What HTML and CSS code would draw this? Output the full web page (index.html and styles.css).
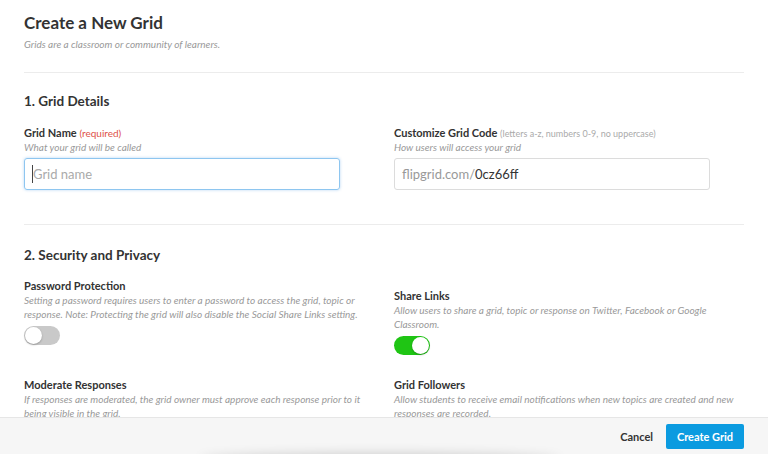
FILE: index.html
```html
<!DOCTYPE html>
<html>
<head>
<meta charset="utf-8">
<link rel="stylesheet" href="styles.css">
</head>
<body>
<div class="page">
  <header class="head">
    <h1 class="title">Create a New Grid</h1>
    <p class="subtitle">Grids are a classroom or community of learners.</p>
  </header>
  <hr class="rule rule-first">
  <section class="section">
    <h2 class="sec-title">1. Grid Details</h2>
    <div class="cols">
      <div class="field">
        <div class="label">Grid Name <span class="req">(required)</span></div>
        <div class="help">What your grid will be called</div>
        <div class="input focus"><span class="caret"></span><span class="ph">Grid name</span></div>
      </div>
      <div class="field">
        <div class="label">Customize Grid Code <span class="note">(letters a-z, numbers 0-9, no uppercase)</span></div>
        <div class="help">How users will access your grid</div>
        <div class="input"><span class="prefix">flipgrid.com/</span><span class="val">0cz66ff</span></div>
      </div>
    </div>
  </section>
  <hr class="rule rule-second">
  <section class="section">
    <h2 class="sec-title">2. Security and Privacy</h2>
    <div class="cols opts">
      <div class="opt">
        <div class="label">Password Protection</div>
        <div class="desc">Setting a password requires users to enter a password to access the grid, topic or response. Note: Protecting the grid will also disable the Social Share Links setting.</div>
        <div class="toggle"><span class="knob"></span></div>
      </div>
      <div class="opt opt-shift">
        <div class="label">Share Links</div>
        <div class="desc">Allow users to share a grid, topic or response on Twitter, Facebook or Google Classroom.</div>
        <div class="toggle on"><span class="knob"></span></div>
      </div>
      <div class="opt">
        <div class="label">Moderate Responses</div>
        <div class="desc">If responses are moderated, the grid owner must approve each response prior to it being visible in the grid.</div>
      </div>
      <div class="opt">
        <div class="label">Grid Followers</div>
        <div class="desc">Allow students to receive email notifications when new topics are created and new responses are recorded.</div>
      </div>
    </div>
  </section>
</div>
<footer class="footer">
  <div class="shade"></div>
  <button class="cancel">Cancel</button>
  <button class="primary">Create Grid</button>
</footer>
</body>
</html>
```
FILE: styles.css
```css
* { box-sizing: border-box; }
html, body { margin: 0; padding: 0; background: #fff; }
body {
  font-family: "Lato", "Open Sans", sans-serif;
  color: #333;
  overflow: hidden;
  height: 454px;
}
.page { padding: 11px 24px 0; }
.title {
  margin: 0;
  font-size: 17px;
  line-height: 24px;
  font-weight: 700;
  color: #333;
}
.subtitle {
  margin: 2px 0 0;
  font-size: 10px;
  line-height: 14px;
  font-style: italic;
  color: #999;
}
.rule { border: 0; border-top: 1px solid #ececec; margin: 0; }
.rule-first { margin-top: 21px; }
.rule-second { margin-top: 34px; }
.sec-title {
  margin: 19px 0 0;
  font-size: 13.5px;
  line-height: 18px;
  font-weight: 700;
  color: #333;
}
.cols {
  display: grid;
  grid-template-columns: 1fr 1fr;
  column-gap: 20px;
  margin-top: 16px;
}
.label {
  font-size: 11px;
  line-height: 14px;
  height: 14px;
  font-weight: 700;
  color: #333;
}
.req { color: #de5148; font-weight: 400; font-size: 10px; line-height: 1; }
.note { color: #aaa; font-weight: 400; font-size: 9px; line-height: 1; }
.help {
  font-size: 10px;
  line-height: 14px;
  font-style: italic;
  color: #999;
}
.input {
  margin-top: 4px;
  width: 316px;
  height: 32px;
  border: 1px solid #dcdcdc;
  border-radius: 3px;
  display: flex;
  align-items: center;
  padding: 0 7px;
  font-size: 13px;
}
.input.focus {
  border-color: #8ec6f0;
  box-shadow: 0 0 3px rgba(90, 160, 230, 0.45);
  padding-left: 7px;
}
.caret { width: 1px; height: 18px; background: #444; }
.ph { color: #aaa; }
.prefix { color: #999; }
.val { color: #333; }
.section:last-child .sec-title { margin-top: 21px; }
.opts { margin-top: 15px; row-gap: 23px; }
.opt-shift { padding-top: 10px; }
.desc {
  font-size: 10px;
  line-height: 14px;
  font-style: italic;
  color: #999;
}
.toggle {
  margin-top: 5px;
  width: 36px;
  height: 19px;
  border-radius: 10px;
  background: #c9c9c9;
  position: relative;
}
.knob {
  position: absolute;
  top: 1px;
  left: 1px;
  width: 17px;
  height: 17px;
  border-radius: 50%;
  background: #fff;
  box-shadow: 0 1px 2px rgba(0,0,0,0.25);
}
.toggle.on { background: #1fc514; }
.toggle.on .knob { left: 18px; }
.footer {
  position: fixed;
  left: 0; right: 0; bottom: 0;
  height: 37px;
  background: #f6f6f6;
  border-top: 1px solid #e6e6e6;
  display: flex;
  align-items: center;
  justify-content: flex-end;
  padding-right: 24px;
  gap: 13px;
  overflow: hidden;
}
.shade {
  position: absolute;
  left: 200px;
  width: 360px;
  bottom: -12px;
  height: 12px;
  box-shadow: 0 0 12px rgba(0,0,0,0.18);
  border-radius: 50%;
}
.cancel {
  background: none;
  border: 0;
  font-family: inherit;
  font-size: 11px;
  font-weight: 700;
  color: #333;
  padding: 0;
}
.primary {
  background: #0b9be0;
  color: #fff;
  border: 0;
  border-radius: 2px;
  height: 25px;
  width: 78px;
  font-family: inherit;
  font-size: 11px;
  font-weight: 700;
  padding: 0;
}
```
